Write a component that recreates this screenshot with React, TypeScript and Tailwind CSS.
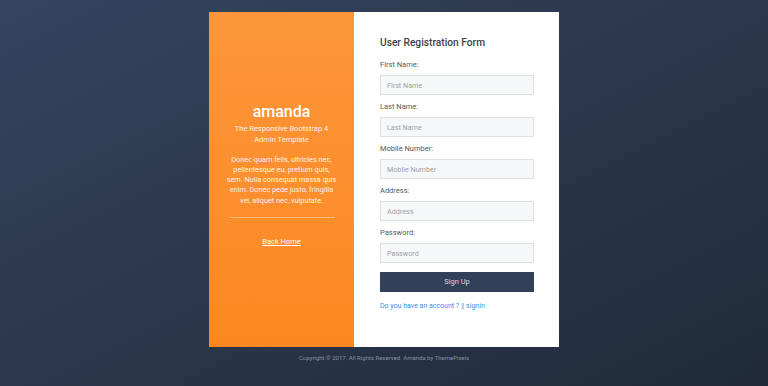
import React from "react";

const fields = [
  { label: "First Name:", ph: "First Name", type: "text" },
  { label: "Last Name:", ph: "Last Name", type: "text" },
  { label: "Mobile Number:", ph: "Mobile Number", type: "text" },
  { label: "Address:", ph: "Address", type: "text" },
  { label: "Password:", ph: "Password", type: "password" },
];

export default function App() {
  return (
    <div className="min-h-screen w-full bg-linear-to-br from-[#35445f] to-[#202a3a] [font-family:Roboto,'Liberation_Sans',sans-serif] flex flex-col items-center pt-[12px]">
      <div className="flex w-[350px] h-[335px]">
        <div className="w-[145px] bg-linear-to-b from-[#fd963b] to-[#fb881f] flex flex-col items-center pt-[90px] text-white text-center">
          <div className="text-[16px] leading-[19px] font-medium">amanda</div>
          <div className="mt-[2px] text-[7.5px] leading-[11px] text-[#fff1e4]">
            The Responsive Bootstrap 4<br />Admin Template
          </div>
          <p className="mt-[9.5px] text-[7.3px] leading-[10.25px] text-[#fff1e4]">
            Donec quam felis, ultricies nec,<br />
            pellentesque eu, pretium quis,<br />
            sem. Nulla consequat massa quis<br />
            enim. Donec pede justo, fringilla<br />
            vel, aliquet nec, vulputate.
          </p>
          <div className="mt-[11px] w-[106px] h-px bg-[#fdb77a]" />
          <a href="#" className="mt-[18px] text-[7.5px] leading-[11px] underline text-white">
            Back Home
          </a>
        </div>
        <div className="flex-1 bg-white pl-[26px] pr-[25px] pt-[24px]">
          <div className="text-[10.2px] leading-[14px] font-medium text-[#3e4247]">User Registration Form</div>
          <div className="mt-[10px] flex flex-col gap-[7px]">
            {fields.map((f) => (
              <div key={f.label} className="flex flex-col">
                <label className="text-[7.5px] leading-[10px] text-[#55595f]">{f.label}</label>
                <input
                  type={f.type}
                  placeholder={f.ph}
                  className="mt-[5px] h-[20px] w-full bg-[#f6f7f9] border border-[#dde1e5] px-[6px] text-[7.2px] text-[#555] placeholder:text-[#9da1a8] outline-none"
                />
              </div>
            ))}
          </div>
          <button className="mt-[9px] w-full h-[20px] bg-[#334059] text-[#d6dae2] text-[7.5px]">Sign Up</button>
          <a href="#" className="block mt-[9px] text-[7px] leading-[10px] text-[#3d8eee]">
            Do you have an account ? || signin
          </a>
        </div>
      </div>
      <div className="mt-[6px] text-[6px] leading-[9px] text-[#8790a2]">
        Copyright © 2017. All Rights Reserved. Amanda by ThemePixels
      </div>
    </div>
  );
}
